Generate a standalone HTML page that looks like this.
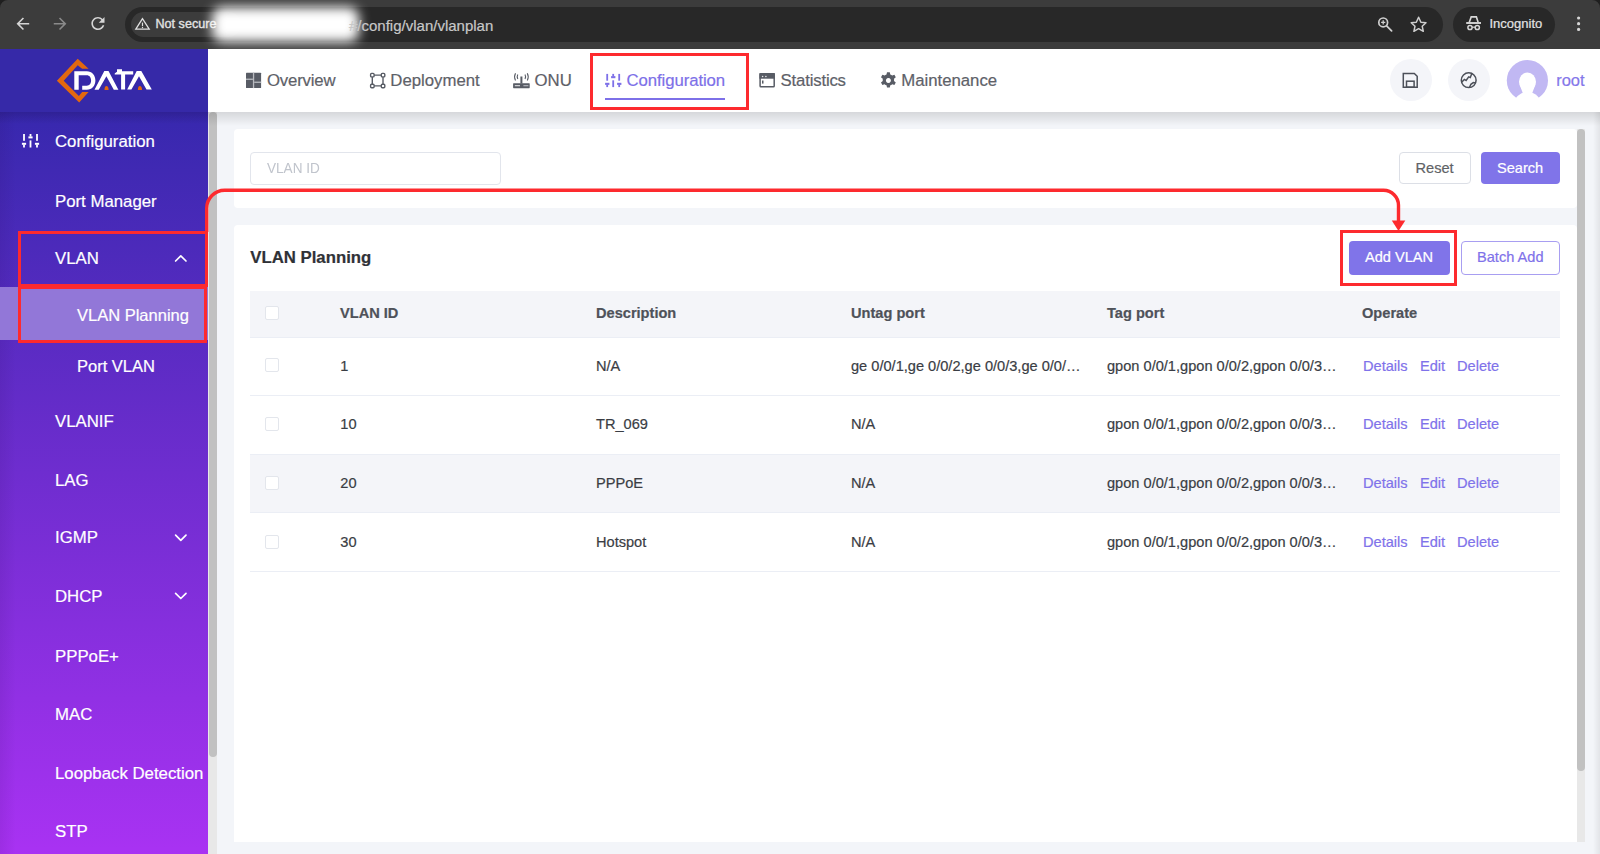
<!DOCTYPE html>
<html><head><meta charset="utf-8">
<style>
*{margin:0;padding:0;box-sizing:border-box}
html,body{width:1600px;height:854px;overflow:hidden;background:#f3f5f9;font-family:"Liberation Sans",sans-serif}
.a{position:absolute}
.t{position:absolute;line-height:1;white-space:nowrap;-webkit-text-stroke:0.2px currentColor}
/* chrome */
#chrome{left:0;top:0;width:1600px;height:48.7px;background:#3c3c3c}
#side{left:0;top:48.7px;width:208px;height:805.3px;background:linear-gradient(180deg,#3728ae 64px,#4029b3 122px,#a832f2 800px,#a932f3 806px)}
#logo{left:0;top:48.7px;width:208px;height:63.3px;background:#3629a8}
.sm{color:#fff;font-size:16.8px}
#nav{left:208px;top:48.7px;width:1392px;height:63.3px;background:#fff}
.nv{color:#5e6168;font-size:16.75px}
.cell{font-size:14.6px;color:#3a3d44}
.th{font-size:14.6px;color:#4f5259;font-weight:bold}
.lk{font-size:14.6px;color:#7f72ea}
.cb{position:absolute;width:14px;height:14px;border:1px solid #e3e6ec;border-radius:2px;background:#fff}
.row{position:absolute;left:250px;width:1310px;height:1px;background:#ebeef5}
.red{position:absolute;border:3.3px solid #fd2a2e}
</style></head><body>
<!-- browser chrome -->
<div id="chrome" class="a"></div>
<div class="a" style="left:125px;top:6.8px;width:1318px;height:35px;border-radius:17.5px;background:#282828"></div>
<div class="a" style="left:131px;top:12px;width:110px;height:25px;border-radius:12.5px;background:#3c3c3c"></div>
<div class="t" style="left:155.5px;top:18.3px;font-size:12.6px;color:#e3e3e3;-webkit-text-stroke:0.35px #e3e3e3">Not secure</div>
<div class="a" style="left:212px;top:7px;width:147px;height:35px;background:#fff;border-radius:10px;filter:blur(6px)"></div>
<div class="t" style="left:349px;top:17.5px;font-size:15px;color:#c8c8c8">#/config/vlan/vlanplan</div>
<div class="a" style="left:1453px;top:6.8px;width:102px;height:35px;border-radius:17.5px;background:#282828"></div>
<div class="t" style="left:1489.5px;top:17.3px;font-size:13px;color:#e3e3e3">Incognito</div>
<svg class="a" style="left:0;top:0" width="1600" height="48" viewBox="0 0 1600 48">
 <path d="M0,0 H8 A8,8 0 0 0 0,8 Z" fill="#1f1f1f"/>
 <path d="M1600,0 H1592 A8,8 0 0 1 1600,8 Z" fill="#1f1f1f"/>
 <g transform="translate(13.4,14.3) scale(0.79)" fill="#d6d6d6"><path d="M20 11H7.83l5.59-5.59L12 4l-8 8 8 8 1.41-1.41L7.83 13H20v-2z"/></g>
 <g transform="translate(50.6,14.3) scale(0.79)" fill="#8a8a8a"><path d="M12 4l-1.41 1.41L16.17 11H4v2h12.17l-5.58 5.59L12 20l8-8z"/></g>
 <g transform="translate(88.1,13.7) scale(0.82)" fill="#d6d6d6"><path d="M17.65 6.35C16.2 4.9 14.21 4 12 4c-4.42 0-7.99 3.58-7.99 8s3.57 8 7.99 8c3.73 0 6.84-2.55 7.73-6h-2.08c-.82 2.33-3.04 4-5.65 4-3.31 0-6-2.69-6-6s2.69-6 6-6c1.66 0 3.14.69 4.22 1.78L13 11h7V4l-2.35 2.35z"/></g>
 <path d="M142.5,18.6 L135.8,29.1 H149.2 Z" fill="none" stroke="#e0e0e0" stroke-width="1.3" stroke-linejoin="miter"/>
 <rect x="141.9" y="22.6" width="1.2" height="3.6" fill="#e0e0e0"/><rect x="141.9" y="27" width="1.2" height="1.1" fill="#e0e0e0"/>
 <circle cx="1383.2" cy="22.4" r="4.4" fill="none" stroke="#cfcfcf" stroke-width="1.7"/>
 <path d="M1381.1,22.4 H1385.3 M1383.2,20.3 V24.5" stroke="#cfcfcf" stroke-width="1.3"/>
 <path d="M1386.6,25.8 L1391.6,30.8" stroke="#cfcfcf" stroke-width="1.8" stroke-linecap="round"/>
 <path d="M1418.6,17.2 L1420.9,22.2 L1426,22.7 L1422.2,26.2 L1423.3,31.3 L1418.6,28.7 L1413.9,31.3 L1415,26.2 L1411.2,22.7 L1416.3,22.2 Z" fill="none" stroke="#cfcfcf" stroke-width="1.5" stroke-linejoin="round"/>
 <path d="M1466.2,23 H1481" stroke="#d6d6d6" stroke-width="1.9"/>
 <path d="M1469.2,22.5 L1471.2,16.9 H1476.4 L1478.2,22.5" fill="none" stroke="#d6d6d6" stroke-width="1.6"/>
 <circle cx="1470" cy="27.5" r="2.1" fill="none" stroke="#d6d6d6" stroke-width="1.5"/>
 <circle cx="1477.3" cy="27.5" r="2.1" fill="none" stroke="#d6d6d6" stroke-width="1.5"/>
 <path d="M1472,27.2 H1475.3" stroke="#d6d6d6" stroke-width="1.2"/>
 <circle cx="1578.6" cy="18" r="1.6" fill="#d6d6d6"/><circle cx="1578.6" cy="23.7" r="1.6" fill="#d6d6d6"/><circle cx="1578.6" cy="29.4" r="1.6" fill="#d6d6d6"/>
</svg>


<!-- sidebar -->
<div id="side" class="a"></div>
<div class="a" style="left:0;top:112px;width:16px;height:742px;background:linear-gradient(90deg,rgba(40,0,80,.09),rgba(40,0,80,0))"></div><div id="logo" class="a"></div><div class="a" style="left:0;top:112px;width:208px;height:12px;background:linear-gradient(180deg,rgba(20,10,60,.22),rgba(20,10,60,0))"></div>
<svg class="a" style="left:0;top:48px" width="208" height="64" viewBox="0 48 208 64">
 <path d="M77.7,58.8 L88.6,68.8 L82.1,68.8 L77.7,65.2 L63.7,80.8 L78.9,95.9 L82.1,92 L88.6,92 L79.2,102.4 L56.9,80.8 Z" fill="#e2680f"/>
 <path d="M74.3,71.2 H86.8 C92,71.2 95.4,75.4 95.4,80.5 C95.4,85.6 92,89.8 86.8,89.8 H82.2 V85.7 H86.8 C89.6,85.7 91.1,83.4 91.1,80.5 C91.1,77.4 89.4,75.2 86.8,75.2 H78.7 V89.8 H74.3 Z" fill="#fff"/>
 <path d="M104.3,71 L108.5,71 L118.4,89.8 L113.8,89.8 L106.4,76.2 L98.7,89.8 L94.5,89.8 Z" fill="#fff"/>
 <path d="M104.5,90 C104.4,87.6 105.3,86 106.4,86 C107.6,86 108.7,87.6 108.6,90 Z" fill="#e2680f"/>
 <path d="M117,71.3 H133.2 V74.5 H125.1 V89.6 H121.1 V74.5 H117 Z M117,69.2 H122 V71.4 H117 Z M114.7,73.6 L116.6,72 H118.4 L117.6,74.4 H114.7 Z" fill="#fff"/>
 <path d="M136.7,71.1 L141.3,71.1 L151.8,89.6 L146.5,89.6 L139,76.2 L131.4,89.6 L127.2,89.6 Z" fill="#fff"/>
 <path d="M137.9,90 C137.8,87.6 138.7,86 139.8,86 C141,86 142.1,87.6 142,90 Z" fill="#e2680f"/>
</svg>


<svg class="a" style="left:0;top:112px" width="208" height="742" viewBox="0 112 208 742">
 <g fill="#fff">
  <rect x="23.1" y="134" width="1.8" height="6.8"/><rect x="21.9" y="142.8" width="4.2" height="2"/><rect x="23.1" y="144.5" width="1.8" height="3"/>
  <rect x="29.6" y="134" width="1.8" height="2.6"/><rect x="28.4" y="136.4" width="4.2" height="2"/><rect x="29.6" y="140.4" width="1.8" height="7.1"/>
  <rect x="36.1" y="134" width="1.8" height="6.8"/><rect x="34.9" y="142.8" width="4.2" height="2"/><rect x="36.1" y="144.5" width="1.8" height="3"/>
 </g>
 <path d="M175.6,261 L180.8,255.8 L186,261" fill="none" stroke="#fff" stroke-width="1.7" stroke-linecap="round" stroke-linejoin="round"/>
 <path d="M175.6,535.2 L180.8,540.3 L186,535.2" fill="none" stroke="#fff" stroke-width="1.7" stroke-linecap="round" stroke-linejoin="round"/>
 <path d="M175.6,593.4 L180.8,598.5 L186,593.4" fill="none" stroke="#fff" stroke-width="1.7" stroke-linecap="round" stroke-linejoin="round"/>
</svg>
<div class="t sm" style="left:55px;top:133.6px">Configuration</div>
<div class="t sm" style="left:55px;top:193.6px">Port Manager</div>
<div class="t sm" style="left:55px;top:250.8px">VLAN</div>
<div class="a" style="left:0;top:287px;width:208px;height:53px;background:#9277d8"></div>
<div class="t sm" style="left:77px;top:307.2px;font-size:16.5px">VLAN Planning</div>
<div class="t sm" style="left:77px;top:358px;font-size:16.5px">Port VLAN</div>
<div class="t sm" style="left:55px;top:414px">VLANIF</div>
<div class="t sm" style="left:55px;top:473.4px">LAG</div>
<div class="t sm" style="left:55px;top:530.4px">IGMP</div>
<div class="t sm" style="left:55px;top:588.5px">DHCP</div>
<div class="t sm" style="left:55px;top:648.6px">PPPoE+</div>
<div class="t sm" style="left:55px;top:707.1px">MAC</div>
<div class="t sm" style="left:55px;top:765.7px">Loopback Detection</div>
<div class="t sm" style="left:55px;top:823.9px">STP</div>
<!-- sidebar scrollbar -->
<div class="a" style="left:208px;top:112px;width:9px;height:742px;background:#e8e8e8"></div>
<div class="a" style="left:209px;top:112px;width:8px;height:645px;border-radius:4px;background:#c1c1c1"></div>

<!-- top nav -->
<div id="nav" class="a"></div>
<div class="t nv" style="left:267px;top:72.6px;letter-spacing:-0.18px">Overview</div>
<div class="t nv" style="left:390.3px;top:72.6px">Deployment</div>
<div class="t nv" style="left:534.5px;top:72.6px">ONU</div>
<div class="t nv" style="left:626.5px;top:72.6px;color:#7d70e8;letter-spacing:-0.08px">Configuration</div>
<div class="a" style="left:605px;top:98px;width:120px;height:2px;background:#7d70e8"></div>
<div class="t nv" style="left:780.6px;top:72.6px;letter-spacing:-0.18px">Statistics</div>
<div class="t nv" style="left:901.2px;top:72.6px">Maintenance</div>
<div class="a" style="left:1390px;top:59px;width:42px;height:42px;border-radius:50%;background:#f4f5f9"></div>
<div class="a" style="left:1448px;top:59px;width:42px;height:42px;border-radius:50%;background:#f4f5f9"></div>

<svg class="a" style="left:208px;top:48px" width="1392" height="64" viewBox="208 48 1392 64">
 <g fill="#585c65">
  <rect x="246" y="72.7" width="15.1" height="15.4" rx="0.6"/>
 </g>
 <g fill="#b9bbc0">
  <rect x="252.9" y="72.7" width="1.3" height="15.4"/><rect x="246" y="78.6" width="6.9" height="1.3"/><rect x="254.2" y="81.6" width="6.9" height="1.3"/>
 </g>
 <g fill="none" stroke="#585c65" stroke-width="1.4">
  <rect x="370.6" y="73.4" width="3.5" height="3.5" rx="1"/><rect x="381.3" y="73.4" width="3.5" height="3.5" rx="1"/>
  <rect x="370.6" y="84.2" width="3.5" height="3.5" rx="1"/><rect x="381.3" y="84.2" width="3.5" height="3.5" rx="1"/>
  <path d="M374.1,75.1 H381.3 M374.1,85.9 H381.3 M372.3,76.9 V84.2 M383,76.9 V84.2"/>
 </g>
 <g fill="#585c65">
  <rect x="513.1" y="83.2" width="16.6" height="5" rx="0.6"/>
  <rect x="520.4" y="76.5" width="2" height="7"/>
 </g>
 <rect x="514.8" y="85.3" width="5.2" height="0.9" fill="#fff"/>
 <rect x="523.4" y="85.3" width="5" height="0.9" fill="#cfd2d8"/>
 <g fill="none" stroke="#585c65" stroke-width="1.1">
  <path d="M515.5,73.2 Q513.6,76.8 515.5,80.4"/><path d="M517.8,74.6 Q516.6,76.8 517.8,79"/>
  <path d="M527.3,73.2 Q529.2,76.8 527.3,80.4"/><path d="M525,74.6 Q526.2,76.8 525,79"/>
 </g>
 <g fill="#7d70e8">
  <rect x="606.3" y="73.9" width="1.8" height="6.8"/><rect x="605.1" y="82.8" width="4.3" height="2.1"/><rect x="606.3" y="84.5" width="1.8" height="2.6"/>
  <rect x="612.3" y="73.9" width="1.8" height="2.5"/><rect x="611.1" y="76.1" width="4.3" height="2.1"/><rect x="612.3" y="80.3" width="1.8" height="6.8"/>
  <rect x="618.3" y="73.9" width="1.8" height="6.8"/><rect x="617.1" y="82.8" width="4.3" height="2.1"/><rect x="618.3" y="84.5" width="1.8" height="2.6"/>
 </g>
 <rect x="760.1" y="73.8" width="14.1" height="13" rx="0.8" fill="none" stroke="#585c65" stroke-width="1.5"/>
 <rect x="759.4" y="73.1" width="15.5" height="5.6" fill="#585c65"/>
 <circle cx="762.6" cy="76.5" r="0.8" fill="#e8e8ec"/><circle cx="765.9" cy="76.5" r="0.8" fill="#e8e8ec"/>
 <rect x="762" y="80.5" width="1.5" height="3.1" fill="#585c65"/>
 <path fill="#585c65" fill-rule="evenodd" d="M887,72.2 h2.8 l0.5,2.3 a6,6 0 0 1 1.9,1.1 l2.2,-0.8 l1.4,2.4 l-1.8,1.6 a6,6 0 0 1 0,2.2 l1.8,1.6 l-1.4,2.4 l-2.2,-0.8 a6,6 0 0 1 -1.9,1.1 l-0.5,2.3 h-2.8 l-0.5,-2.3 a6,6 0 0 1 -1.9,-1.1 l-2.2,0.8 l-1.4,-2.4 l1.8,-1.6 a6,6 0 0 1 0,-2.2 l-1.8,-1.6 l1.4,-2.4 l2.2,0.8 a6,6 0 0 1 1.9,-1.1 Z M888.4,77.9 a2.5,2.5 0 1 0 0.01,0 Z"/>
 <g fill="none" stroke="#4c5059" stroke-width="1.5">
  <path d="M1403.3,73.4 H1414.3 L1417.2,76.3 V87.2 H1403.3 Z"/>
  <rect x="1406.5" y="81.2" width="7.6" height="6"/>
  <circle cx="1468.7" cy="80.2" r="7.4"/>
  <path d="M1461.6,82.2 L1464.4,79.4 L1466.1,80.4 L1468.7,76.9 L1470.3,77.6 L1471.9,73.3"/>
  <path d="M1469.6,87.3 L1470.9,84.3 L1473.3,82.6 L1475.6,83.1"/>
 </g>
 <circle cx="1527.4" cy="80.5" r="20.6" fill="#c1b8f3"/>
 <ellipse cx="1527.5" cy="81.8" rx="8.5" ry="9.4" fill="#fff"/><path d="M1519.6,84.5 L1522.9,93.5 H1532.1 L1535.4,84.5 Z" fill="#fff"/>
 <circle cx="1527.5" cy="106" r="14" fill="#fff"/>
</svg>
<div class="t" style="left:1556.2px;top:72px;font-size:16.5px;color:#8577ea">root</div>
<div class="a" style="left:208px;top:112px;width:1392px;height:14px;background:linear-gradient(180deg,rgba(0,0,0,.12),rgba(0,0,0,0))"></div>

<!-- search card -->
<div class="a" style="left:234px;top:129px;width:1343px;height:78.5px;background:#fff;border-radius:4px"></div>
<div class="a" style="left:250px;top:152px;width:251px;height:33px;border:1px solid #e2e5ec;border-radius:4px;background:#fff"></div>
<div class="t" style="left:267px;top:160.8px;font-size:14.6px;color:#c0c4cc;transform:scaleX(0.93);transform-origin:0 0;-webkit-text-stroke:0">VLAN ID</div>
<div class="a" style="left:1399px;top:152px;width:72px;height:32px;border:1px solid #dcdfe6;border-radius:4px;background:#fff"></div>
<div class="t" style="left:1415.5px;top:160.9px;font-size:14.6px;color:#606266">Reset</div>
<div class="a" style="left:1481px;top:152px;width:79px;height:32.4px;border-radius:4px;background:#8074e9"></div>
<div class="t" style="left:1497px;top:160.9px;font-size:14.6px;color:#fff">Search</div>

<!-- table card -->
<div class="a" style="left:234px;top:224.6px;width:1343px;height:617.4px;background:#fff;border-radius:4px 4px 0 0"></div>
<div class="t" style="left:250.3px;top:249.9px;font-size:16.75px;color:#2f3136;font-weight:bold">VLAN Planning</div>
<div class="a" style="left:1349px;top:241px;width:101px;height:33.5px;border-radius:4px;background:#8074e9"></div>
<div class="t" style="left:1365px;top:249.9px;font-size:14.6px;color:#fff">Add VLAN</div>
<div class="a" style="left:1461px;top:241px;width:99px;height:33.5px;border:1px solid #a89ef1;border-radius:4px;background:#fff"></div>
<div class="t" style="left:1477px;top:249.9px;font-size:14.6px;color:#7f72ea">Batch Add</div>

<div class="a" style="left:250px;top:291px;width:1310px;height:46px;background:#f4f5f9"></div>
<div class="cb" style="left:265px;top:306px"></div>
<div class="t th" style="left:340px;top:306px">VLAN ID</div>
<div class="t th" style="left:596px;top:306px">Description</div>
<div class="t th" style="left:851px;top:306px">Untag port</div>
<div class="t th" style="left:1107px;top:306px">Tag port</div>
<div class="t th" style="left:1362px;top:306px">Operate</div>

<div class="row" style="top:337px"></div>
<div class="cb" style="left:265px;top:358px"></div>
<div class="t cell" style="left:340.3px;top:359.2px">1</div>
<div class="t cell" style="left:596px;top:359.2px">N/A</div>
<div class="t cell" style="left:851px;top:359.2px">ge 0/0/1,ge 0/0/2,ge 0/0/3,ge 0/0/…</div>
<div class="t cell" style="left:1107px;top:359.2px">gpon 0/0/1,gpon 0/0/2,gpon 0/0/3…</div>
<div class="t lk" style="left:1363px;top:359.2px">Details</div>
<div class="t lk" style="left:1420px;top:359.2px">Edit</div>
<div class="t lk" style="left:1457px;top:359.2px">Delete</div>
<div class="row" style="top:395px"></div>

<div class="cb" style="left:265px;top:416.6px"></div>
<div class="t cell" style="left:340.3px;top:416.6px">10</div>
<div class="t cell" style="left:596px;top:416.6px">TR_069</div>
<div class="t cell" style="left:851px;top:416.6px">N/A</div>
<div class="t cell" style="left:1107px;top:416.6px">gpon 0/0/1,gpon 0/0/2,gpon 0/0/3…</div>
<div class="t lk" style="left:1363px;top:416.6px">Details</div>
<div class="t lk" style="left:1420px;top:416.6px">Edit</div>
<div class="t lk" style="left:1457px;top:416.6px">Delete</div>
<div class="row" style="top:454px"></div>

<div class="a" style="left:250px;top:454.5px;width:1310px;height:58px;background:#f4f5f9"></div>
<div class="cb" style="left:265px;top:476.2px"></div>
<div class="t cell" style="left:340.3px;top:476.2px">20</div>
<div class="t cell" style="left:596px;top:476.2px">PPPoE</div>
<div class="t cell" style="left:851px;top:476.2px">N/A</div>
<div class="t cell" style="left:1107px;top:476.2px">gpon 0/0/1,gpon 0/0/2,gpon 0/0/3…</div>
<div class="t lk" style="left:1363px;top:476.2px">Details</div>
<div class="t lk" style="left:1420px;top:476.2px">Edit</div>
<div class="t lk" style="left:1457px;top:476.2px">Delete</div>
<div class="row" style="top:512px"></div>

<div class="cb" style="left:265px;top:534.7px"></div>
<div class="t cell" style="left:340.3px;top:534.7px">30</div>
<div class="t cell" style="left:596px;top:534.7px">Hotspot</div>
<div class="t cell" style="left:851px;top:534.7px">N/A</div>
<div class="t cell" style="left:1107px;top:534.7px">gpon 0/0/1,gpon 0/0/2,gpon 0/0/3…</div>
<div class="t lk" style="left:1363px;top:534.7px">Details</div>
<div class="t lk" style="left:1420px;top:534.7px">Edit</div>
<div class="t lk" style="left:1457px;top:534.7px">Delete</div>
<div class="row" style="top:571px"></div>

<!-- content scrollbar -->
<div class="a" style="left:1577px;top:129px;width:8px;height:713px;background:#e8e8e8"></div>
<div class="a" style="left:1577px;top:129px;width:8px;height:642px;border-radius:4px;background:#c1c1c1"></div>

<div class="a" style="left:1593px;top:112px;width:7px;height:742px;background:linear-gradient(90deg,rgba(0,0,0,0),rgba(0,0,0,.07))"></div>
<!-- red annotations -->
<div class="red" style="left:590px;top:53px;width:159px;height:57px"></div>
<div class="red" style="left:18px;top:231px;width:190px;height:56px"></div>
<div class="red" style="left:18px;top:286px;width:189px;height:57px"></div>
<div class="red" style="left:1340.3px;top:230.4px;width:116.5px;height:55.8px"></div>

<svg class="a" style="left:0;top:0" width="1600" height="854" viewBox="0 0 1600 854">
 <path d="M206.7,232 V208.3 A18,18 0 0 1 224.7,190.3 H1383.5 A15,15 0 0 1 1398.5,205.3 V222" fill="none" stroke="#fd2a2e" stroke-width="3.4"/>
 <path d="M1391.8,220.6 H1405.3 L1398.5,231 Z" fill="#fd2a2e"/>
</svg>
</body></html>
